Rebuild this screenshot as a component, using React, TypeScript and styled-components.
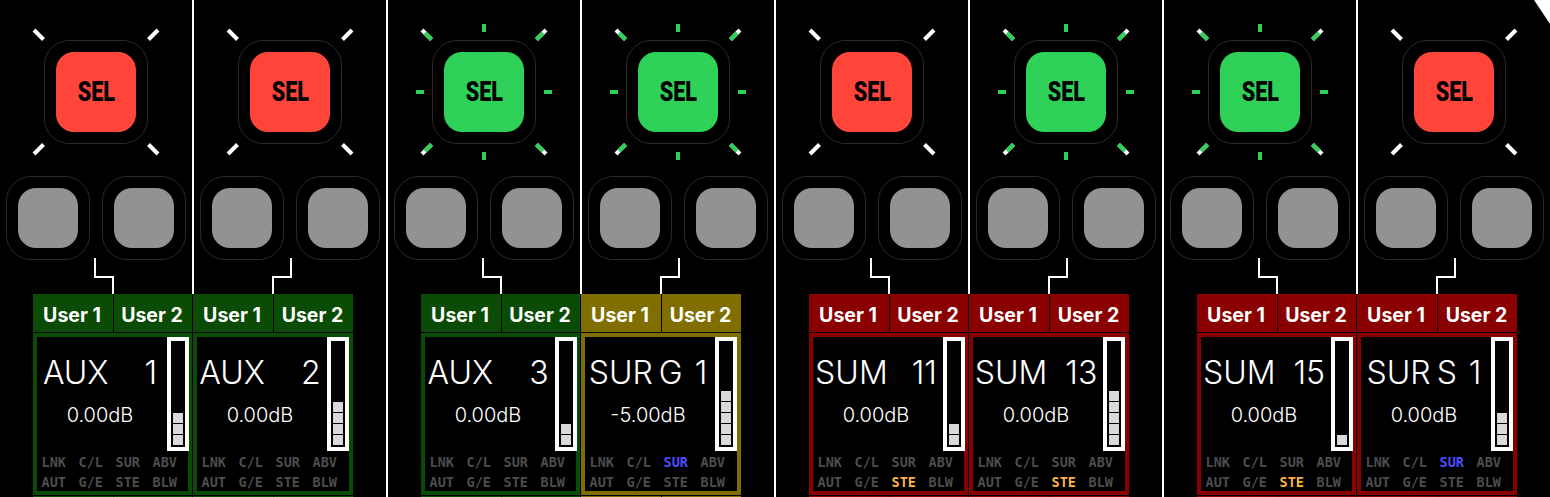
import React, { FC } from 'react'
import styled, { createGlobalStyle } from 'styled-components'

type Tone = 'green' | 'yellow' | 'red'

type Channel = {
  name: string
  value: string
  tone: Tone
  selected: boolean
  level: number
  active?: 'SUR' | 'STE'
}

const toneColors: Record<Tone, string> = {
  green  : '#0a4b05',
  yellow : '#806f00',
  red    : '#8a0000',
}

const activeColors: Record<string, string> = {
  SUR : '#4d4dff',
  STE : '#ffb340',
}

const labels = [ 'LNK', 'C/L', 'SUR', 'ABV', 'AUT', 'G/E', 'STE', 'BLW' ]

const pairs: Channel[][] = [
  [
    { name: 'AUX      1', value: '0.00dB', tone: 'green', selected: false, level: 3 },
    { name: 'AUX      2', value: '0.00dB', tone: 'green', selected: false, level: 4 },
  ],
  [
    { name: 'AUX      3', value: '0.00dB', tone: 'green', selected: true, level: 2 },
    { name: 'SUR G  1', value: '-5.00dB', tone: 'yellow', selected: true, level: 5, active: 'SUR' },
  ],
  [
    { name: 'SUM    11', value: '0.00dB', tone: 'red', selected: false, level: 2, active: 'STE' },
    { name: 'SUM   13', value: '0.00dB', tone: 'red', selected: true, level: 5, active: 'STE' },
  ],
  [
    { name: 'SUM   15', value: '0.00dB', tone: 'red', selected: true, level: 1, active: 'STE' },
    { name: 'SUR S  1', value: '0.00dB', tone: 'red', selected: false, level: 3, active: 'SUR' },
  ],
]

const Ticks: FC<{ selected: boolean }> = ( { selected } ) => {
  const diagonals = [ [ -1, -1 ], [ 1, -1 ], [ -1, 1 ], [ 1, 1 ] ]
  const straights = [ [ 0, -1 ], [ 1, 0 ], [ 0, 1 ], [ -1, 0 ] ]
  return (
    <TickSvg viewBox='-70 -70 140 140'>
      {diagonals.map( ( [ x, y ] ) => (
        <g key={`${x}${y}`} strokeWidth={4}>
          <line x1={x * 62} y1={y * 62} x2={x * 52.5} y2={y * 52.5} stroke='#fff'/>
          {selected && <line x1={x * 59} y1={y * 59} x2={x * 52.5} y2={y * 52.5} stroke='#30d158'/>}
        </g>
      ) )}
      {selected && straights.map( ( [ x, y ] ) => (
        <line
          key={`${x}${y}`}
          x1={x * 60}
          y1={y * 60}
          x2={x * 68}
          y2={y * 68}
          stroke='#30d158'
          strokeWidth={4}
        />
      ) )}
    </TickSvg>
  )
}

const Strip: FC<{ channel: Channel, second: boolean }> = ( { channel, second } ) => (
  <StripBox $second={second}>
    <SelRing>
      <Ticks selected={channel.selected}/>
      <SelButton $selected={channel.selected}><SelText>SEL</SelText></SelButton>
    </SelRing>
    <SmallRow>
      <SmallRing><SmallButton/></SmallRing>
      <SmallRing><SmallButton/></SmallRing>
    </SmallRow>
    <Connector $flip={second}>
      <ConnectorTop $flip={second}/>
      <ConnectorBottom $flip={second}/>
    </Connector>
  </StripBox>
)

const Panel: FC<{ channel: Channel }> = ( { channel } ) => (
  <PanelBox>
    <UserRow>
      <UserCell $tone={channel.tone}>User 1</UserCell>
      <UserCell $tone={channel.tone}>User 2</UserCell>
    </UserRow>
    <Display $tone={channel.tone}>
      <DisplayTop>
        <Readout>
          <Name>{channel.name}</Name>
          <Value>{channel.value}</Value>
        </Readout>
        <Meter>
          {Array.from( { length: channel.level } ).map( ( _, i ) => <Segment key={i}/> )}
        </Meter>
      </DisplayTop>
      <Labels>
        {labels.map( ( label ) => (
          <Label key={label} $color={channel.active === label ? activeColors[ label ] : undefined}>{label}</Label>
        ) )}
      </Labels>
    </Display>
    <UserRow>
      <UserCell $tone={channel.tone}/>
      <UserCell $tone={channel.tone}/>
    </UserRow>
  </PanelBox>
)

const App: FC = () => (
  <Page>
    <GlobalStyle/>
    {pairs.map( ( pair ) => (
      <Pair key={pair[ 0 ].name}>
        <Strips>
          <Strip channel={pair[ 0 ]} second={false}/>
          <Strip channel={pair[ 1 ]} second/>
        </Strips>
        <Panels>
          <Panel channel={pair[ 0 ]}/>
          <Panel channel={pair[ 1 ]}/>
        </Panels>
      </Pair>
    ) )}
    <Corner viewBox='0 0 16 24'><polygon points='0,0 16,0 16,24' fill='#fff'/></Corner>
  </Page>
)

export default App

const GlobalStyle = createGlobalStyle`
  html, body {
    margin     : 0;
    height     : 100%;
    overflow   : hidden;
    background : #000;
  }

  * {
    box-sizing : border-box;
  }
`

const Page = styled.div`
  position    : relative;
  display     : flex;
  width       : 1550px;
  height      : 497px;
  overflow    : hidden;
  background  : #000;
  font-family : Inter, "Liberation Sans", sans-serif;
`

const Corner = styled.svg`
  position : absolute;
  top      : 0;
  right    : 0;
  width    : 16px;
  height   : 24px;
`

const Pair = styled.div`
  flex         : none;
  width        : 388px;
  height       : 497px;
  border-right : 2px solid #fff;
`

const Strips = styled.div`
  display : flex;
  height  : 294px;
`

const StripBox = styled.div<{ $second: boolean }>`
  flex         : none;
  width        : ${( p ) => p.$second ? '192px' : '194px'};
  padding-top  : 40px;
  border-right : ${( p ) => p.$second ? 'none' : '2px solid #fff'};
`

const SelRing = styled.div`
  position        : relative;
  display         : flex;
  align-items     : center;
  justify-content : center;
  width           : 104px;
  height          : 104px;
  margin          : 0 auto;
  border          : 1px solid #2b2b2b;
  border-radius   : 25px;
`

const TickSvg = styled.svg`
  position : absolute;
  top      : -19px;
  left     : -19px;
  width    : 140px;
  height   : 140px;
`

const SelButton = styled.div<{ $selected: boolean }>`
  display         : flex;
  flex            : none;
  align-items     : center;
  justify-content : center;
  width           : 80px;
  height          : 80px;
  border-radius   : 18px;
  background      : ${( p ) => p.$selected ? '#30d158' : '#ff453a'};
`

const SelText = styled.span`
  font-family : Roboto, sans-serif;
  font-weight : 900;
  font-size   : 27px;
  color       : #000;
  transform   : scaleX(.8);
`

const SmallRow = styled.div`
  display         : flex;
  justify-content : center;
  gap             : 12px;
  margin-top      : 32px;
`

const SmallRing = styled.div`
  display         : flex;
  align-items     : center;
  justify-content : center;
  width           : 84px;
  height          : 84px;
  border          : 1px solid #2b2b2b;
  border-radius   : 25px;
`

const SmallButton = styled.div`
  flex          : none;
  width         : 60px;
  height        : 60px;
  border-radius : 18px;
  background    : #929292;
`

const Connector = styled.div<{ $flip: boolean }>`
  width       : 20px;
  margin-top  : -2px;
  margin-left : ${( p ) => p.$flip ? '78px' : '94px'};
`

const ConnectorTop = styled.div<{ $flip: boolean }>`
  height        : 20px;
  border-bottom : 2px solid #fff;
  ${( p ) => p.$flip ? 'border-right' : 'border-left'} : 2px solid #fff;
`

const ConnectorBottom = styled.div<{ $flip: boolean }>`
  height : 16px;
  ${( p ) => p.$flip ? 'border-left' : 'border-right'} : 2px solid #fff;
`

const Panels = styled.div`
  display     : grid;
  grid-template-columns : 159px 160px;
  gap         : 1px;
  width       : 320px;
  margin-left : 33px;
`

const PanelBox = styled.div`
  display        : flex;
  flex-direction : column;
  gap            : 1px;
`

const UserRow = styled.div`
  display               : grid;
  grid-template-columns : 80px 1fr;
  gap                   : 1px;
  height                : 38px;
`

const UserCell = styled.div<{ $tone?: Tone }>`
  display         : flex;
  align-items     : center;
  justify-content : center;
  padding-right   : 2px;
  padding-top     : 4px;
  background      : ${( p ) => toneColors[ p.$tone ?? 'green' ]};
  color           : #fff;
  font-weight     : 700;
  font-size       : 19.5px;
`

const Display = styled.div<{ $tone: Tone }>`
  height : 162px;
  border : 4px solid ${( p ) => toneColors[ p.$tone ]};
  background : #000;
`

const DisplayTop = styled.div`
  display : flex;
  height  : 114px;
`

const Readout = styled.div`
  flex          : none;
  width         : 130px;
  padding-top   : 16px;
  padding-right : 4px;
  color         : #fff;
  font-weight   : 300;
  text-align    : center;
  white-space   : pre;
`

const Name = styled.div`
  font-size    : 32px;
  line-height  : 40px;
  word-spacing : -3px;
`

const Value = styled.div`
  margin-top  : 10px;
  font-size   : 20px;
  line-height : 24px;
`

const Meter = styled.div`
  flex            : none;
  display         : flex;
  flex-direction  : column;
  justify-content : flex-end;
  gap             : 1px;
  width           : 22px;
  height          : 114px;
  padding         : 2px;
  border          : 4px solid #fff;
`

const Segment = styled.div`
  height     : 10px;
  background : #d9d9d9;
`

const Labels = styled.div`
  display               : grid;
  grid-template-columns : repeat(4, 37px);
  grid-auto-rows        : 20px;
  padding-top           : 1px;
  padding-left          : 4.5px;
  font-family           : "DejaVu Sans Mono", monospace;
  font-weight           : 700;
  font-size             : 13.5px;
  line-height           : 20px;
`

const Label = styled.span<{ $color?: string }>`
  color : ${( p ) => p.$color ?? '#4d4d4d'};
`
